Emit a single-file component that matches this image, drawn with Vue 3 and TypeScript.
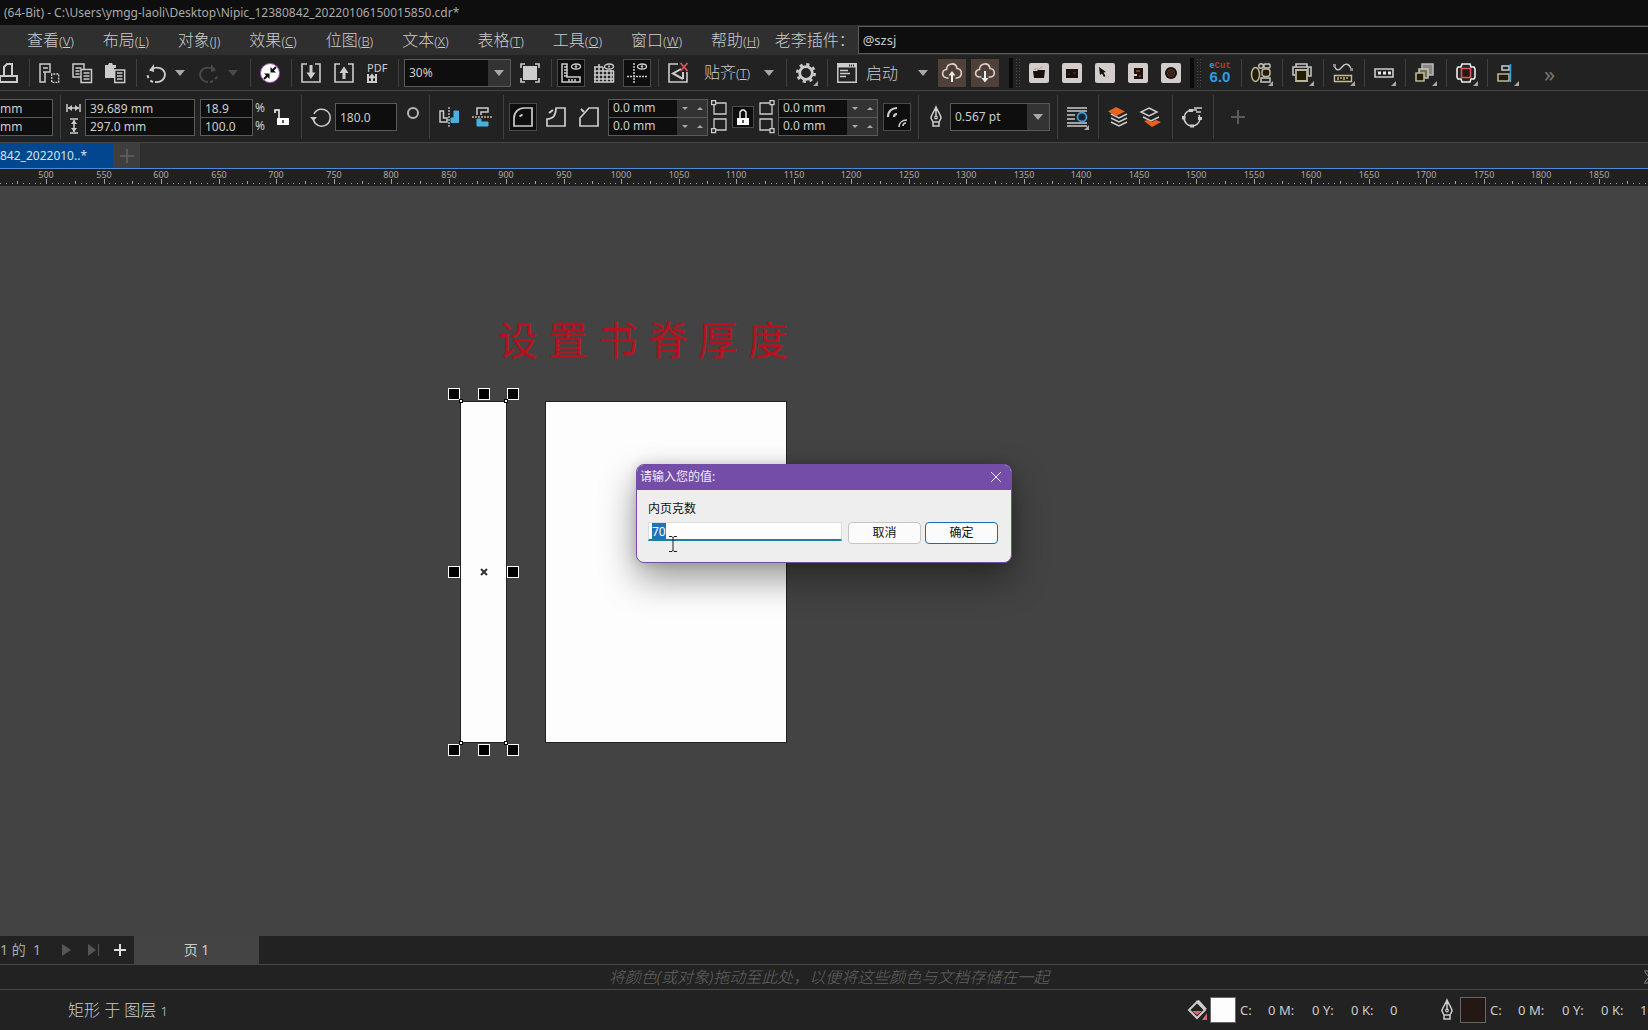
<script setup lang="ts">
import { nextTick, onMounted, ref } from 'vue'

interface MenuEntry { label: string; key: string }
interface Tick { x: number; len: number }
interface Swatch { icon: string; color: string; k: string }

const menus: MenuEntry[] = [
  { label: '查看', key: 'V' }, { label: '布局', key: 'L' }, { label: '对象', key: 'J' },
  { label: '效果', key: 'C' }, { label: '位图', key: 'B' }, { label: '文本', key: 'X' },
  { label: '表格', key: 'T' }, { label: '工具', key: 'O' }, { label: '窗口', key: 'W' },
  { label: '帮助', key: 'H' },
]

const corner = '<path d="M22 18v5h-5z" fill="#aaa" stroke="none"/>'
const thin = 'stroke-width="1.3"'

const icons: Record<string, string> = {
  print: '<path d="M5 13H2v6h17v-6h-4M6 13V4l3-3h5v12z"/>',
  cut: '<path d="M1 19V1h10v8H6v10z M4 5h5M4 9h3" stroke-width="1.5"/><path d="M12.700 11v8.300h7V11z" stroke-width="1.300" stroke-dasharray="2 1"/>',
  copy: '<path d="M9 14H1V1h11v5M3.500 5h6M3.500 8h4M3.500 11h4" stroke-width="1.500"/><path d="M9 6.500h10.500v13H9zM11.500 10h6M11.500 13h6M11.500 16h6" stroke-width="1.500"/>',
  paste: '<path d="M0 2h3l1-2h3l1 2h3v3H9v10H0z" fill="currentColor" stroke="none"/><path d="M9.700 7h10v12.500h-10zM12 10h5.500M12 13h5.500M12 16h5.500" stroke-width="1.400"/>',
  undo: '<path d="M6 6c5-3 12-1 13 5 0 5-4 9-10 8" stroke-width="1.800"/><path d="M7 19C4 18 2 15 1.500 12" stroke-dasharray="3 3"/><path d="M3 7.500L8 1v8z" fill="currentColor" stroke="none"/>',
  redo: '<path d="M14 6C9 3 2 5 1 11c0 5 4 8 8 8" stroke-width="1.800"/><path d="M11 19c4-1 7-4 7.500-7" stroke-dasharray="3 3"/><path d="M17 7.500L12 1v8z" fill="currentColor" stroke="none"/>',
  welcome: '<circle cx="10" cy="10" r="9.500" fill="#fff" stroke="#a24cb4" stroke-width="1"/><path d="M4 16l4.500-4.500M16 4l-4.500 4.500" stroke="#111"/><path d="M4 10.500h5.500V16zM10.500 4v5.500H16z" fill="#111" stroke="none"/>',
  import: '<path d="M6 1H1v18h5M14 1h5v18h-5M1 19h18" stroke-width="1.600"/><path d="M10 2v8" stroke-width="3"/><path d="M5.500 9.500h9L10 16z" fill="currentColor" stroke="none"/>',
  export: '<path d="M6 1H1v18h5M14 1h5v18h-5M1 19h18" stroke-width="1.600"/><path d="M10 9v7" stroke-width="3"/><path d="M5.500 10h9L10 3.500z" fill="currentColor" stroke="none"/>',
  fit: '<path d="M4 4h12v12H4z" fill="#ccc"/><path d="M1 5V1h4M15 1h4v4M19 15v4h-4M5 19H1v-4" stroke-width="1.600"/>',
  rulers: '<path d="M1 1h5v13h13v5H1zM3 4h3M3 7h3M3 10h3M3 13h3M8 16v3M11 16v3M14 16v3" stroke-width="1.500"/><ellipse cx="15" cy="3.500" rx="4.500" ry="2.500" stroke-width="1.300"/><circle cx="15" cy="3.500" r="1.200" fill="currentColor" stroke="none"/>',
  grid: '<path d="M1 4v15M5 1v18M9 4v15M13 7v12M17 7v12M19.500 8v11M0 4h9M0 8h20M0 12h20M0 16h20M0 19h20" stroke-width="1.500"/><ellipse cx="15" cy="3.500" rx="4.500" ry="2.500" stroke-width="1.300"/><circle cx="15" cy="3.500" r="1" fill="currentColor" stroke="none"/>',
  guides: '<path d="M7 0v20M0 13.500h20" stroke-width="1.500" stroke-dasharray="2 1"/><ellipse cx="15" cy="3.500" rx="4.500" ry="2.500" stroke-width="1.300"/><circle cx="15" cy="3.500" r="1.200" fill="currentColor" stroke="none"/>',
  snapoff: '<path d="M10 1H1v18h18V9" stroke-width="1.600"/><path d="M13 6L5 10.500l10 5.500M15 9v7" /><path d="M12.500 0l7 8M19.500 0l-7 8" stroke="#d9575c" stroke-width="1.800"/>',
  gear: '<circle cx="10" cy="10" r="6.300" stroke-width="2.800"/><circle cx="10" cy="10" r="8.700" stroke-width="2.600" stroke-dasharray="3.200 3.630"/>' + corner,
  launch: '<path d="M.8.800h18.400v18.400H.800z" stroke-width="1.500"/><path d="M1 1h18v3.500H1z" fill="currentColor" stroke="none"/><path d="M3 7.500h8M3 10.500h10M3 13.500h6" stroke-width="1.500"/><path d="M12 2.500h6" stroke="#222" stroke-dasharray="1 1"/>',
  cloudup: '<path d="M6.500 15H5C-1 14-.5 7 4.500 6.500 5-.500 14-1 15 5.500c5.500.500 6 8.500 0 9.500h-1.500" stroke="#ddd0c8" stroke-width="1.600"/><path d="M10 19v-8" stroke="#eee"/><path d="M6.500 12.500h7L10 8z" fill="#eee" stroke="none"/>',
  clouddown: '<path d="M6.500 14H5C-1 14-.5 7 4.500 6.500 5-.500 14-1 15 5.500c5.500.500 6 8.500 0 8.500h-1.500" stroke="#ddd0c8" stroke-width="1.600"/><path d="M10 8v8" stroke="#eee"/><path d="M6.500 15h7L10 19.500z" fill="#eee" stroke="none"/>',
  p1: '<rect width="20" height="20" rx="2" fill="#d2cdca" stroke="none"/><path d="M4 8h4l1-1h7l-1 8H5z" fill="#16110f" stroke="none"/><path d="M4.500 7l3-1.500 2 1 4-3" stroke="#c79089" stroke-width="1"/>',
  p2: '<rect width="20" height="20" rx="2" fill="#d2cdca" stroke="none"/><path d="M4 6h12v9H4z" fill="#1b100b" stroke="none"/><path d="M6 11h2M11 10h3" stroke="#6b3c24" stroke-width="1"/>',
  p3: '<rect width="20" height="20" rx="2" fill="#d2cdca" stroke="none"/><path d="M4 4l7 5-2.500.500L10.500 13 9 14l-2-3.500L5 12z" fill="#111" stroke="none"/><path d="M12 15l2-2" stroke="#dba48c" stroke-width="1"/>',
  p4: '<rect width="20" height="20" rx="2" fill="#d2cdca" stroke="none"/><path d="M6 5h9v11H6v-3h3v-2H6z" fill="#20120b" stroke="none"/><path d="M8 8h4M11 13h2" stroke="#a86b38" stroke-width="1"/>',
  p5: '<rect width="20" height="20" rx="2" fill="#d2cdca" stroke="none"/><circle cx="10" cy="10" r="6" fill="#160d09" stroke="none"/><circle cx="10" cy="10" r="3.500" stroke="#66432f" stroke-width="1"/><path d="M8 9h4M8 11h4" stroke="#66432f" stroke-width="1"/>',
  cluster: '<ellipse cx="4.500" cy="11.500" rx="4" ry="7" fill="#221c05" stroke="#b9b59a" stroke-width="1.500"/><circle cx="10" cy="3" r="2.300" stroke="#c9c7bd" stroke-width="1.400"/><rect x="13" y="1" width="6" height="4" rx="1" stroke="#c9c7bd" stroke-width="1.400"/><rect x="11" y="6" width="8" height="7.500" rx="3" fill="#221c05" stroke="#b9b59a" stroke-width="1.500"/><path d="M10 15h9v4h-9z" stroke="#c9c7bd" stroke-width="1.500"/>' + corner,
  printer: '<path d="M4 4V1h11v3M3 12H1V4h18v9h-3M16 5v8" stroke-width="1.500"/><path d="M4 7h11v11H4z" fill="#221c05" stroke="#b9b59a" stroke-width="1.800"/>' + corner,
  curve: '<path d="M1 2c2 6 5 6 8 2s7-4 9 2" stroke-width="1.300"/><path d="M0 1h3v3H0zM17 5h3v3h-3z" fill="#888" stroke="none"/><path d="M1.500 12.500h17v6h-17zM5 14v3M8 14v2M11 14v3M14 14v2" fill="#221c05" stroke="#c3bd9e" stroke-width="1.400"/>' + corner,
  dots: '<path d="M1 6h18v8H1z" stroke-width="1.600"/><path d="M4 8.500h3v3H4zM9 8.500h3v3H9zM14 8.500h3v3h-3z" fill="#e9e9e9" stroke="none"/><path d="M3.500 8.500h1M9 8.500h1" stroke="#e05050" stroke-width="1"/>' + corner,
  stack: '<path d="M7 1h11v11H7z" fill="#888" stroke="#bbb" stroke-width="1.500"/><path d="M4 6h9v9H4z" fill="#77715a" stroke="#ccc8b4" stroke-width="1.500"/><path d="M1 10h8v8H1z" fill="#221c05" stroke="#b9b59a" stroke-width="1.600"/>' + corner,
  target: '<path d="M6 1h8l1 3h3l1 2v8l-1 2h-3l-1 3H6l-1-3H2l-1-2V6l1-2h3z" stroke="#eee" stroke-width="1.600"/><path d="M5.500 5.500h9v9h-9z" fill="#2a1414" stroke="#d9575c" stroke-width="1.600"/>' + corner,
  align: '<path d="M5 3h7v4H5z" stroke-width="1.500" /><path d="M1 11h11v7H1z" fill="#221c05" stroke="#b9b59a" stroke-width="1.600"/><path d="M13.500 1v18" stroke="#3f9fd0" stroke-width="1.500"/>' + corner,
  rotate: '<path d="M2.500 13a8.500 8.500 0 1 0 .5-6" stroke-width="1.500"/><path d="M-1 10h7l-3.500 4z" fill="currentColor" stroke="none"/>',
  mirrorh: '<path d="M1 4h3.500v7H8v4H1z" stroke-width="1.500"/><path d="M19.500 4H15v7h-3v4.500h7.500z" fill="#49b2dc" stroke="#49b2dc" stroke-width="1"/><path d="M10 0v20" stroke-width="1.300" stroke-dasharray="2 1"/>',
  mirrorv: '<path d="M5 8V1h11v4H9v3" stroke-width="1.500"/><path d="M5 12h4v3h7v4H5z" fill="#49b2dc" stroke="#49b2dc" stroke-width="1"/><path d="M0 10h20" stroke="#d6b48c" stroke-width="1.300" stroke-dasharray="2 1"/>',
  round: '<path d="M1 19v-8A10 10 0 0 1 11 1h8v18z" stroke-width="1.700"/><path d="M6.500 9.500l3-2" stroke-width="2"/>',
  scallop: '<path d="M1 19v-7c6 0 9-4 9-11h9v18z" stroke-width="1.700"/><path d="M3 6l4-3" stroke-width="2"/>',
  chamfer: '<path d="M1 19V11L10 1h9v18z" stroke-width="1.700"/><path d="M2 2l3 3" stroke-width="2"/>',
  relative: '<path d="M1 10C1 4 5 1 10 1M7 10C7 8 8 7 10 7" stroke-width="2.200"/><path d="M12 20c0-4 3-7 8-7M16 19c0-2 1-3 3-3" stroke-width="1.600"/>',
  pen: '<path d="M10 0C8 5 5 8 5 11l2 4h6l2-4c0-3-3-6-5-11zM10 2v8M7 15v4h6v-4" stroke-width="1.500"/><circle cx="10" cy="10.500" r="1.300" stroke-width="1.200"/>',
  wrap: '<path d="M0 1h20M0 4h20M0 8h8M0 12h8M0 16h20M0 19h20" stroke-width="1.500"/><circle cx="15" cy="10" r="4.500" fill="#222" stroke="#3a9bd6" stroke-width="1.800"/>' + corner,
  front: '<path d="M3 11l8 4 8-4M3 15l8 4 8-4" stroke-width="1.500"/><path d="M3 7l8 4 8-4" stroke-width="1.500"/><path d="M0 4.500L8 0l9 4.500L8 9z" fill="#e8641b" stroke="none"/>',
  back: '<path d="M8 1l8 4-8 4-8-4z" stroke-width="1.500"/><path d="M2 10l8 4 8-4" stroke-width="1.500"/><path d="M3 14l4-1 4 2 4-2 5 2-9 5z" fill="#e8641b" stroke="none"/>',
  curves: '<path d="M10 3a8 8 0 1 0 8 9M10 3l5 0M18 12l-1-4" stroke-width="1.600"/><path d="M7 2h4v3H7zM0 9h3.500v3.500H0zM8 17.500h4v3H8zM16 10h4v3h-4z" fill="#ccc" stroke="none"/><path d="M12 1h8M14 5h5" stroke-width="1.300"/>',
  cornertl: `<path d="M4 3h11v11H3V4" ${thin}/><path d="M.600.600h4v4h-4z" ${thin}/>`,
  cornerbl: `<path d="M4 12h11V1H3v10" ${thin}/><path d="M.600 10.600h4v4h-4z" ${thin}/>`,
  cornertr: `<path d="M11 3H1v11h12V5" ${thin}/><path d="M11 .600h4v4h-4z" ${thin}/>`,
  cornerbr: `<path d="M11 12H1V1h12v9" ${thin}/><path d="M11 10.600h4v4h-4z" ${thin}/>`,
  width: '<path d="M1 4v8M14 4v8M2 8h11" stroke-width="1.500"/><path d="M2 8l4-3v6zM13 8L9 5v6z" fill="currentColor" stroke="none"/>',
  height: '<path d="M4 1h8M4 15h8M8 2v12" stroke-width="1.500"/><path d="M8 2L5 6h6zM8 14l-3-4h6z" fill="currentColor" stroke="none"/>',
  unlock: '<path d="M1 4V1h4v8" stroke="#fff" stroke-width="1.500"/><path d="M3 9h12v7H3z" fill="#fff" stroke="none"/><path d="M9 11v3" stroke="#222" stroke-width="1.500"/>',
  lock: '<path d="M5 9V3l2-2h2l2 2v6" stroke="#eee" stroke-width="1.500"/><path d="M2 9h12v7H2z" fill="#fff" stroke="none"/><path d="M8 11v3" stroke="#222" stroke-width="1.500"/>',
  bucket: '<path d="M10 2l8 8-8 8-8-8z" stroke-width="2"/><path d="M9 1l3-1 8 9-3 1z" fill="#ccc" stroke="none"/><path d="M5 11h10l-5 4zM20 13v7h-5z" fill="#e0646b" stroke="none"/>',
}

const main1 = ['import', 'export']
const plugin = ['p1', 'p2', 'p3', 'p4', 'p5']
const ecut = ['cluster', 'printer', 'curve', 'dots', 'stack', 'target', 'align']
const swatches: Swatch[] = [
  { icon: 'bucket', color: '#fdfdfd', k: '0' },
  { icon: 'pen', color: '#231813', k: '100' },
]

const origin = 46
const step = 57.5
const majors = Array.from({ length: 28 }, (_, i) => ({ x: Math.round(origin + i * step), value: 500 + i * 50 }))
const ticks: Tick[] = Array.from({ length: 300 }, (_, i) => {
  const n = i - 8
  return { x: Math.round(origin + (n * step) / 10), len: n % 10 === 0 ? 5 : n % 5 === 0 ? 3 : 1 }
})

const handles = [
  [448, 202], [478, 202], [507, 202], [448, 380], [507, 380], [448, 558], [478, 558], [507, 558],
]
const nodes = [[459, 213], [504, 213], [459, 555], [504, 555]]

const grams = ref('70')
const gramsBox = ref<HTMLInputElement | null>(null)
onMounted(async () => {
  await nextTick()
  gramsBox.value?.focus({ preventScroll: true })
  gramsBox.value?.select()
})
</script>

<template>
  <div class="app">
    <header class="title">(64-Bit) - C:\Users\ymgg-laoli\Desktop\Nipic_12380842_20220106150015850.cdr*</header>

    <nav class="menu">
      <button v-for="m in menus" :key="m.key" class="menu-item">{{ m.label }}<small>(<u>{{ m.key }}</u>)</small></button>
      <label class="menu-label" for="plugin">老李插件：</label>
      <input id="plugin" class="plugin" value="@szsj">
    </nav>

    <div class="bar bar-main">
      <button class="ib"><svg class="ic" viewBox="0 0 20 20" v-html="icons.print" /></button>
      <i class="sep" />
      <button v-for="n in ['cut', 'copy', 'paste']" :key="n" class="ib"><svg class="ic" viewBox="0 0 20 20" v-html="icons[n]" /></button>
      <i class="sep" />
      <div class="pair">
        <button class="ib"><svg class="ic" viewBox="0 0 20 20" v-html="icons.undo" /></button>
        <button class="caret" />
      </div>
      <div class="pair dim">
        <button class="ib"><svg class="ic" viewBox="0 0 20 20" v-html="icons.redo" /></button>
        <button class="caret" />
      </div>
      <i class="sep" />
      <button class="ib"><svg class="ic" viewBox="0 0 20 20" v-html="icons.welcome" /></button>
      <i class="sep" />
      <button v-for="n in main1" :key="n" class="ib"><svg class="ic" viewBox="0 0 20 20" v-html="icons[n]" /></button>
      <button class="ib pdf">PDF<svg viewBox="0 0 10 10"><path d="M1 1v8h8V1M5 9V2M2.500 5L5 2l2.500 3" /></svg></button>
      <i class="sep" />
      <div class="combo zoom"><input aria-label="缩放级别" value="30%"><button class="caret" /></div>
      <button class="ib"><svg class="ic" viewBox="0 0 20 20" v-html="icons.fit" /></button>
      <i class="sep" />
      <button class="ib on"><svg class="ic" viewBox="0 0 20 20" v-html="icons.rulers" /></button>
      <button class="ib"><svg class="ic" viewBox="0 0 20 20" v-html="icons.grid" /></button>
      <button class="ib on"><svg class="ic" viewBox="0 0 20 20" v-html="icons.guides" /></button>
      <i class="sep" />
      <button class="ib"><svg class="ic" viewBox="0 0 20 20" v-html="icons.snapoff" /></button>
      <div class="pair">
        <button class="tb snap">贴齐<small>(<u>T</u>)</small></button>
        <button class="caret" />
      </div>
      <i class="sep" />
      <button class="ib"><svg class="ic" viewBox="0 0 20 20" v-html="icons.gear" /></button>
      <i class="sep" />
      <button class="ib"><svg class="ic" viewBox="0 0 20 20" v-html="icons.launch" /></button>
      <div class="pair">
        <button class="tb run">启动</button>
        <button class="caret" />
      </div>
      <button class="ib cloud"><svg class="ic" viewBox="0 0 20 20" v-html="icons.cloudup" /></button>
      <button class="ib cloud"><svg class="ic" viewBox="0 0 20 20" v-html="icons.clouddown" /></button>
      <div class="pair first-grip">
        <i class="grip" />
        <button class="ib"><svg class="ic" viewBox="0 0 20 20" v-html="icons[plugin[0]]" /></button>
      </div>
      <button v-for="n in plugin.slice(1)" :key="n" class="ib"><svg class="ic" viewBox="0 0 20 20" v-html="icons[n]" /></button>
      <div class="pair">
        <i class="grip" />
        <button class="ib ecut"><span><b>e</b>Cut</span><strong>6.0</strong></button>
      </div>
      <template v-for="n in ecut" :key="n">
        <i class="sep" />
        <button class="ib"><svg class="ic" viewBox="0 0 20 20" v-html="icons[n]" /></button>
      </template>
      <button class="more">»</button>
    </div>

    <div class="bar bar-prop">
      <div class="stack pos">
        <input aria-label="X" value="mm">
        <input aria-label="Y" value="mm">
      </div>
      <i class="sep" />
      <div class="pair fields">
        <div class="mini">
          <svg class="mi" viewBox="0 0 16 16" v-html="icons.width" />
          <svg class="mi" viewBox="0 0 16 16" v-html="icons.height" />
        </div>
        <div class="stack size">
          <input aria-label="宽度" value="39.689 mm">
          <input aria-label="高度" value="297.0 mm">
        </div>
      </div>
      <div class="stack scale">
        <input aria-label="水平缩放" value="18.9">
        <input aria-label="垂直缩放" value="100.0">
      </div>
      <div class="pct"><span>%</span><span>%</span></div>
      <button class="ib narrow"><svg class="mi" viewBox="0 0 16 16" v-html="icons.unlock" /></button>
      <i class="sep" />
      <div class="pair">
        <label class="ib" for="angle"><svg class="ic" viewBox="0 0 20 20" v-html="icons.rotate" /></label>
        <input id="angle" class="angle" value="180.0">
      </div>
      <span class="degree" />
      <i class="sep" />
      <button v-for="n in ['mirrorh', 'mirrorv']" :key="n" class="ib"><svg class="ic" viewBox="0 0 20 20" v-html="icons[n]" /></button>
      <i class="sep" />
      <button class="ib on"><svg class="ic" viewBox="0 0 20 20" v-html="icons.round" /></button>
      <button v-for="n in ['scallop', 'chamfer']" :key="n" class="ib"><svg class="ic" viewBox="0 0 20 20" v-html="icons[n]" /></button>
      <div class="pair fields">
        <div class="spins">
          <div v-for="n in ['左上', '左下']" :key="n" class="spin"><input :aria-label="n" value="0.0 mm"><button class="tri" /><button class="tri up" /></div>
        </div>
        <div class="mini">
          <svg class="mi" viewBox="0 0 16 16" v-html="icons.cornertl" />
          <svg class="mi" viewBox="0 0 16 16" v-html="icons.cornerbl" />
        </div>
      </div>
      <button class="ib on small"><svg class="mi" viewBox="0 0 16 16" v-html="icons.lock" /></button>
      <div class="pair fields">
        <div class="mini">
          <svg class="mi" viewBox="0 0 16 16" v-html="icons.cornertr" />
          <svg class="mi" viewBox="0 0 16 16" v-html="icons.cornerbr" />
        </div>
        <div class="spins">
          <div v-for="n in ['右上', '右下']" :key="n" class="spin"><input :aria-label="n" value="0.0 mm"><button class="tri" /><button class="tri up" /></div>
        </div>
      </div>
      <button class="ib on"><svg class="ic" viewBox="0 0 20 20" v-html="icons.relative" /></button>
      <i class="sep" />
      <label class="ib narrow" for="outline"><svg class="ic" viewBox="0 0 20 20" v-html="icons.pen" /></label>
      <div class="combo outline"><input id="outline" value="0.567 pt"><button class="caret" /></div>
      <i class="sep" />
      <button class="ib"><svg class="ic" viewBox="0 0 20 20" v-html="icons.wrap" /></button>
      <i class="sep" />
      <button v-for="n in ['front', 'back']" :key="n" class="ib"><svg class="ic" viewBox="0 0 20 20" v-html="icons[n]" /></button>
      <i class="sep" />
      <button class="ib"><svg class="ic" viewBox="0 0 20 20" v-html="icons.curves" /></button>
      <i class="sep" />
      <button class="plus" aria-label="自定义" />
    </div>

    <div class="tabs">
      <button class="tab">842_2022010..*</button>
      <button class="tab-add" aria-label="新建文档"><i class="plus" /></button>
    </div>

    <svg class="ruler">
      <rect v-for="t in ticks" :key="t.x" :x="t.x" :y="15 - t.len" width="1" :height="t.len" />
      <text v-for="m in majors" :key="m.value" :x="m.x" y="9">{{ m.value }}</text>
    </svg>

    <main class="canvas">
      <h1 class="caption">设 置 书 脊 厚 度</h1>
      <div class="sheet spine" />
      <div class="sheet cover" />
      <i v-for="(h, i) in handles" :key="i" class="handle" :style="{ left: h[0] + 'px', top: h[1] + 'px' }" />
      <i v-for="(p, i) in nodes" :key="'n' + i" class="node" :style="{ left: p[0] + 'px', top: p[1] + 'px' }" />
      <svg class="center" viewBox="0 0 8 8"><path d="M1 1l6 6M7 1L1 7" /></svg>

      <form class="dialog" @submit.prevent>
        <div class="dialog-title">
          <span>请输入您的值:</span>
          <button type="button" class="close" aria-label="关闭"><svg viewBox="0 0 10 10"><path d="M0 0l10 10M10 0L0 10" /></svg></button>
        </div>
        <div class="dialog-body">
          <label for="grams">内页克数</label>
          <div class="dialog-row">
            <input id="grams" ref="gramsBox" v-model="grams">
            <button type="button">取消</button>
            <button type="submit" class="ok">确定</button>
          </div>
        </div>
      </form>
      <svg class="ibeam" viewBox="0 0 8 16"><path d="M0 .500h3l1 1 1-1h3M4 1v14M0 15.500h3l1-1 1 1h3" /></svg>
    </main>

    <div class="pages">
      <div class="pager">
        <span class="count">1 的&nbsp; 1</span>
        <button aria-label="下一页"><svg viewBox="0 0 12 12"><path d="M0 0l9 6-9 6z" /></svg></button>
        <button aria-label="最后一页"><svg viewBox="0 0 12 12"><path d="M0 0l8 6-8 6zM10 0h1v12h-1z" /></svg></button>
        <button class="add" aria-label="添加页"><i class="plus" /></button>
      </div>
      <button class="page-tab">页 1</button>
    </div>

    <div class="palette">
      <span>将颜色(或对象)拖动至此处，以便将这些颜色与文档存储在一起</span>
      <button class="palette-more" aria-label="展开"><svg viewBox="0 0 4 12"><path d="M0 0h4M0 12h4M1 1l3 4M1 11l3-4" /></svg></button>
    </div>

    <footer class="status">
      <div class="object">矩形 于 图层 <small>1</small></div>
      <div v-for="s in swatches" :key="s.icon" class="swatch">
        <svg class="ic" viewBox="0 0 20 20" v-html="icons[s.icon]" />
        <i class="chip" :style="{ background: s.color }" />
        <div class="cmyk">
          <span>C: <b>0</b></span><span>M: <b>0</b></span><span>Y: <b>0</b></span><span>K: <b>{{ s.k }}</b></span>
        </div>
      </div>
    </footer>
  </div>
</template>

<style>
body { background: #222; overflow: hidden; }
</style>

<style scoped>
.app { display: flex; flex-direction: column; min-height: 100vh; overflow: hidden; background: #222; color: #ccc; font: 12px/16px "Noto Sans", "Noto Sans CJK SC", sans-serif; }
.app * { box-sizing: border-box; }
button, input { margin: 0; padding: 0; border: 0; border-radius: 0; background: none; color: inherit; font: inherit; outline: none; min-width: 0; }
i { font-style: normal; flex: none; }
small { font-size: 13px; }
svg { display: block; overflow: visible; flex: none; }

.title { height: 25px; padding-left: 4px; background: #0e0e0e; color: #aaa; font-size: 12px; line-height: 25px; white-space: nowrap; }

.menu { display: flex; align-items: center; height: 30px; padding-left: 27px; gap: 29px; background: #2f2f2f; font-size: 16px; font-weight: 300; }
.menu-item { white-space: nowrap; line-height: 28px; }
.menu-label { margin-left: -14px; width: 54px; line-height: 28px; white-space: nowrap; }
.plugin { flex: 1; height: 28px; padding-left: 4px; border: 1px solid #5c5c5c; border-right: 0; background: #0e0e0e; font-size: 13px; font-weight: 400; }

.bar { display: flex; align-items: center; gap: 5px; border-bottom: 1px solid #454545; }
.bar > * { flex: none; }
.bar-main { height: 36px; margin-left: -6px; }
.bar-prop { height: 52px; padding-top: 1px; }
.sep { width: 3px; height: 28px; border-right: 1px solid #3f3f3f; }
.bar-prop .sep { height: 44px; }
.pair { display: flex; align-items: center; }
.fields { gap: 3px; }
.ib { display: flex; align-items: center; justify-content: center; width: 28px; height: 28px; flex: none; }
.ib.on { border: 1px solid #4a4a4a; background: #0e0e0e; }
.ib.small { width: 22px; height: 22px; }
.ib.narrow { width: 24px; }
.ib.cloud { background: #50403a; }
.ic { width: 20px; height: 20px; fill: none; stroke: currentColor; stroke-width: 2; }
.mi { width: 16px; height: 16px; fill: none; stroke: currentColor; }
.caret { width: 20px; height: 28px; display: flex; align-items: center; justify-content: center; flex: none; }
.caret::before { content: ""; border: 5px solid transparent; border-top: 6px solid #a8a8a8; border-bottom: 0; }
.dim { color: #4a4a4a; }
.dim .caret::before { border-top-color: #4a4a4a; }
.pdf { flex-direction: column; font-size: 11px; line-height: 10px; align-items: flex-start; padding-left: 4px; }
.pdf svg { width: 10px; height: 10px; fill: none; stroke: currentColor; stroke-width: 2; }
.combo { display: flex; height: 28px; border: 1px solid #5a5a5a; background: #0e0e0e; }
.combo input { flex: 1; padding-left: 4px; }
.combo .caret { width: 22px; height: 26px; background: #333; }
.zoom { width: 107px; }
.outline { width: 100px; margin-left: -3px; }
.tb { font-size: 16px; font-weight: 300; line-height: 28px; white-space: nowrap; text-align: left; }
.snap { width: 62px; padding-left: 7px; }
.run { width: 47px; }
.first-grip { margin-left: 5px; }
.grip { display: flex; width: 16px; height: 30px; border-left: 4px solid #0b0b0b; background: radial-gradient(circle, #4a4a4a 1px, transparent 1px) 2px 0 / 3px 3px; background-clip: content-box; padding-left: 2px; padding-right: 3px; }
.ecut { flex-direction: column; font: 700 9px/9px "Liberation Mono", monospace; color: #b33a3a; }
.ecut b { color: #2c9fe0; }
.ecut strong { font: 700 15px/12px "Liberation Sans", sans-serif; color: #2c9fe0; }
.more { margin-left: 18px; color: #777; font-size: 22px; line-height: 26px; }

.stack { display: flex; flex-direction: column; border: 1px solid #5a5a5a; background: #0e0e0e; height: 37px; }
.stack input { height: 17px; padding-left: 4px; width: 100%; }
.stack input + input { height: 18px; border-top: 1px solid #5a5a5a; }
.pos { width: 53px; border-left: 0; margin-left: -2px; padding-left: 2px; }
.pos { margin-left: 0; padding-left: 0; }
.pos input { padding: 0; }
.size { width: 110px; }
.scale { width: 53px; }
.pct { display: flex; flex-direction: column; width: 10px; margin-left: -3px; }
.pct span { line-height: 18px; }
.mini { display: flex; flex-direction: column; gap: 2px; }
.angle { width: 62px; height: 28px; padding-left: 4px; border: 1px solid #5a5a5a; background: #0e0e0e; }
.degree { width: 12px; height: 12px; margin: 0 3px 8px 5px; border: 2px solid #b5b5b5; border-radius: 50%; }
.spins { width: 100px; border: 1px solid #5a5a5a; background: #0e0e0e; }
.spin { display: flex; height: 17px; }
.spin + .spin { height: 18px; border-top: 1px solid #5a5a5a; }
.spin input { flex: 1; padding-left: 4px; }
.tri { display: flex; align-items: center; justify-content: center; width: 15px; background: #333; }
.tri::before { content: ""; border: 3px solid transparent; border-top: 3px solid #aaa; border-bottom: 0; }
.tri.up::before { border: 3px solid transparent; border-bottom: 3px solid #aaa; border-top: 0; }
.plus { width: 14px; height: 14px; background: linear-gradient(currentColor, currentColor) center / 14px 2px no-repeat, linear-gradient(currentColor, currentColor) center / 2px 14px no-repeat; color: #5a5a5a; }
.bar > .plus { margin-left: 12px; }

.tabs { display: flex; height: 26px; background: #2f2f2f; border-bottom: 1px solid #4d8bd6; }
.tab { display: flex; width: 113px; background: #00478f; color: #d5e2f0; line-height: 26px; white-space: nowrap; }
.tab-add { display: flex; align-items: center; justify-content: center; width: 27px; background: #3e3e3e; }

.ruler { width: 100%; height: 17px; background: #202020; overflow: hidden; }
.ruler rect { fill: #a0a0a0; }
.ruler text { fill: #aaa; font-size: 9px; text-anchor: middle; }

.canvas { position: relative; flex: 1; background: #434343; }
.caption { position: absolute; left: 498px; top: 132px; margin: 0; color: #b5121f; font: 400 40px/48px "Liberation Serif", "Noto Sans CJK SC", serif; white-space: nowrap; }
.sheet { position: absolute; top: 215px; height: 342px; background: #fdfdfd; border: 1px solid #222; }
.spine { left: 460px; width: 47px; }
.cover { left: 545px; width: 242px; }
.handle { position: absolute; width: 12px; height: 12px; background: #000; border: 1px solid #fff; }
.node { position: absolute; width: 4px; height: 4px; background: #fff; border: 1px solid #000; }
.center { position: absolute; left: 480px; top: 382px; width: 8px; height: 8px; fill: none; stroke: #333; stroke-width: 2; }
.dialog { position: absolute; left: 636px; top: 278px; width: 376px; border: 1px solid #744da9; border-radius: 8px; background: #eee; color: #111; box-shadow: 0 16px 36px rgba(0, 0, 0, .4), 0 0 12px rgba(0, 0, 0, .15); overflow: hidden; }
.dialog-title { display: flex; align-items: center; justify-content: space-between; height: 25px; padding: 0 10px 2px 3px; background: #744da9; color: #f2ecf8; }
.close svg { width: 10px; height: 10px; stroke: #f2ecf8; fill: none; }
.dialog-body { padding: 11px 13px 18px 11px; }
.dialog-body label { display: block; }
.dialog-row { display: flex; gap: 4px; margin-top: 5px; }
.dialog-row input { flex: 1; height: 19px; margin-right: 2px; padding-left: 3px; border: 1px solid #ddd; border-bottom: 2px solid #1b7fa0; background: #fdfdfd; }
.dialog-row input::selection { background: #1f73b8; color: #fff; }
.dialog-row button { width: 73px; height: 22px; border: 1px solid #c4c4c4; border-radius: 4px; background: #fbfbfb; }
.dialog-row .ok { border-color: #1a6da8; }
.ibeam { position: absolute; left: 669px; top: 350px; width: 8px; height: 16px; fill: none; stroke: #222; }

.pages { display: flex; height: 29px; border-bottom: 1px solid #484848; }
.pager { display: flex; align-items: center; width: 134px; padding-right: 8px; overflow: hidden; font-size: 14px; }
.count { flex: 1; white-space: nowrap; color: #aaa; }
.pager button { width: 12px; margin-left: 14px; }
.pager svg { width: 12px; height: 12px; fill: #555; }
.pager .plus { display: block; width: 12px; height: 12px; color: #ddd; background-size: 12px 2px, 2px 12px; }
.page-tab { width: 125px; background: #444; font-size: 14px; }
.palette { position: relative; display: flex; justify-content: center; align-items: center; height: 25px; padding-left: 10px; border-bottom: 1px solid #484848; color: #626262; font-size: 16px; font-style: italic; font-weight: 300; }
.palette-more { position: absolute; right: 0; width: 4px; }
.palette-more svg { width: 4px; height: 12px; fill: none; stroke: #888; }
.status { display: flex; align-items: center; height: 40px; white-space: nowrap; }
.object { flex: 1; padding-left: 68px; font-size: 16px; line-height: 24px; font-weight: 300; }
.swatch { display: flex; align-items: center; width: 250px; flex: none; }
.swatch:last-child { width: 211px; }
.chip { width: 26px; height: 26px; margin: 0 4px 0 3px; border: 1px solid #666; }
.cmyk { display: grid; grid-template-columns: 35px 40px 35px 35px; gap: 4px; font-size: 13px; }
.cmyk span { display: flex; justify-content: space-between; }
.cmyk b { width: 7px; font-weight: 400; }
</style>
